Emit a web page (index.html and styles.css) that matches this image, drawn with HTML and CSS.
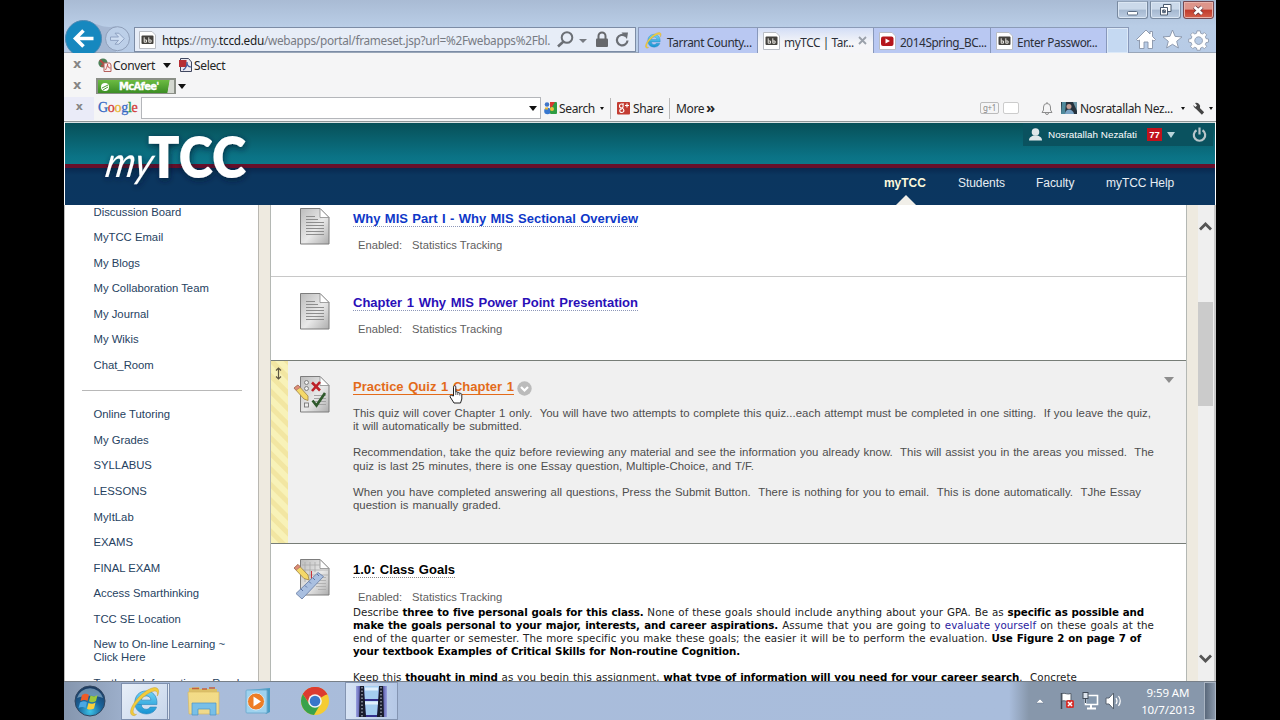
FILE: index.html
```html
<!DOCTYPE html>
<html lang="en">
<head>
<meta charset="utf-8">
<title>myTCC</title>
<link rel="stylesheet" href="styles.css">
</head>
<body>
<svg class="defs" width="0" height="0">
  <defs>
    <linearGradient id="paper" x1="0" y1="0" x2="1" y2="1"><stop offset="0" stop-color="#bcbcbc"/><stop offset=".55" stop-color="#e9e9e9"/><stop offset="1" stop-color="#adadad"/></linearGradient>
    <linearGradient id="ie" x1="0" y1="0" x2="0" y2="1"><stop offset="0" stop-color="#71d3f5"/><stop offset="1" stop-color="#1693d2"/></linearGradient>
    <radialGradient id="orb" cx=".5" cy=".85" r=".8"><stop offset="0" stop-color="#3cc4e8"/><stop offset=".5" stop-color="#19639a"/><stop offset="1" stop-color="#1c3c63"/></radialGradient>
    <linearGradient id="folder" x1="0" y1="0" x2="0" y2="1"><stop offset="0" stop-color="#f3dc86"/><stop offset="1" stop-color="#efd98c"/></linearGradient>
    <linearGradient id="film" x1="0" y1="0" x2="1" y2="0"><stop offset="0" stop-color="#9aa2e0"/><stop offset=".2" stop-color="#34308c"/><stop offset=".8" stop-color="#34308c"/><stop offset="1" stop-color="#9aa2e0"/></linearGradient>
    <symbol id="page" viewBox="0 0 30 37">
      <path d="M.5.5H20l9 9V36H.5z" fill="url(#paper)" stroke="#7d7d7d"/>
      <path d="M20 .5V9.500h9z" fill="#fff" stroke="#8b8b8b" stroke-width=".8"/>
    </symbol>
    <symbol id="bb" viewBox="0 0 17 18">
      <path d="M.5.5H13l3.500 3.500V17.500H.5z" fill="#fff" stroke="#b9bdc4"/>
      <rect x="2.500" y="4.500" width="12" height="8.500" rx="1" fill="#44423e"/>
      <path d="M5.200 6.300v5M5.200 9h2.300v2.200H5.200M9.800 6.300v5M9.800 9h2.300v2.200H9.800" stroke="#e8e6e0" fill="none"/>
    </symbol>
    <symbol id="elogo" viewBox="0 0 40 40">
      <path d="M11 23H34C35 12 28 7 21.500 7 13 7 8 13 8 21c0 8 6 13 13.500 13 6 0 10.500-3 12-8H26c-1.200 2-2.600 2.600-4.600 2.600-3.600 0-5.700-2.600-5.700-5.600M15.700 17.800c.6-3.400 2.800-5 5.800-5s5.200 1.800 5.500 5z" fill="url(#ie)" fill-rule="evenodd" stroke="#2a86bd" stroke-width=".8"/>
      <path d="M8 36C-1 37 3 24 13 14 23 4 35-1 36 7c.3 2-.4 4-1.500 6 .5-3 .3-6-3-6C24 7 6 23 6 31c0 3 2 4 4 3.500z" fill="#f2cc3c" stroke="#caa133" stroke-width=".6"/>
    </symbol>
  </defs>
</svg>
<div class="screen">
  <header class="chrome">
    <svg class="navbtns" width="70" height="53" viewBox="0 0 70 53">
      <path d="M26 23c10 1 14 6 26 3v26H26z" fill="#a6b8d3"/>
      <circle cx="19.500" cy="38.500" r="18" fill="#1688bf" stroke="#4d89b3"/>
      <path d="M29.500 38.500H11.500M19.500 30.500l-8 8 8 8" fill="none" stroke="#fff" stroke-width="3.600"/>
      <circle cx="53.500" cy="38.700" r="12" fill="#bccfe8" stroke="#8f9fb9"/>
      <path d="M46.500 37h8l-3.500-3.800h3.800l5.500 5.500-5.500 5.500H51l3.500-3.800h-8z" fill="#cfdef2" stroke="#8a9dbd" stroke-width=".9"/>
    </svg>
    <div class="chrome-main">
      <div class="winbtns">
        <span class="wb"><svg width="31" height="18"><rect x="10.500" y="10.500" width="10" height="3.500" rx="1" fill="#fff" stroke="#5b6c83"/></svg></span>
        <span class="wb"><svg width="31" height="18"><path d="M13.500 3.500h7.500v7H13.500z" fill="#fff" stroke="#4b5a6e"/><path d="M10.500 6.500H17.500v7.500h-7zM12.700 9h2.600v2.700h-2.600z" fill="#fff" fill-rule="evenodd" stroke="#4b5a6e"/></svg></span>
        <span class="wb close"><svg width="31" height="18"><path d="M11.500 6l7.500 7M19 6l-7.500 7" stroke="#63333b" stroke-width="4.200"/><path d="M11.500 6l7.500 7M19 6l-7.500 7" stroke="#fff" stroke-width="2.700"/></svg></span>
      </div>
      <div class="navrow">
        <div class="address">
          <svg width="17" height="18"><use href="#bb"/></svg>
          <span class="url"><b>https</b>://my.<b>tccd.edu</b>/webapps/portal/frameset.jsp?url=%2Fwebapps%2Fbl.</span>
          <svg class="addr-icons" width="80" height="22" viewBox="0 0 80 22">
            <circle cx="12" cy="8.500" r="5.300" fill="none" stroke="#6b6f75" stroke-width="2"/><path d="M8.500 12.500l-5.500 5" stroke="#6b6f75" stroke-width="2.600"/>
            <path d="M24 10h8l-4 4z" fill="#777b82"/>
            <rect x="41" y="9.500" width="12" height="8.500" rx="1" fill="#66686c"/><path d="M43.500 10V7a3.500 3.500 0 0 1 7 0v3" fill="none" stroke="#66686c" stroke-width="2"/>
            <path d="M70.500 7A5.300 5.300 0 1 0 72.500 11.500" fill="none" stroke="#6b6f75" stroke-width="2.200"/><path d="M66.500 3.500l6.500 0-1 6.500z" fill="#6b6f75"/>
          </svg>
        </div>
        <div class="tabs">
          <div class="tab t1"><svg width="19" height="19"><use href="#elogo"/></svg><span>Tarrant County...</span></div>
          <div class="tab active t2"><svg width="17" height="18"><use href="#bb"/></svg><span>myTCC | Tar...</span><svg width="9" height="9" class="tabx"><path d="M1 1l7 7M8 1L1 8" stroke="#9aa0aa" stroke-width="1.800"/></svg></div>
          <div class="tab t3"><svg width="17" height="18"><path d="M.5.5H13l3.500 3.500V17.500H.5z" fill="#fff" stroke="#b9bdc4"/><rect x="2" y="4.500" width="12.500" height="9.500" rx="2" fill="#b5161b"/><path d="M6.500 6.500v5l4.500-2.500z" fill="#fff"/></svg><span>2014Spring_BC...</span></div>
          <div class="tab t4"><svg width="17" height="18"><use href="#bb"/></svg><span>Enter Passwor...</span></div>
          <div class="newtab"></div>
        </div>
        <svg class="tools" width="80" height="25" viewBox="0 0 80 25">
          <g fill="#fff" stroke="#8793a8" stroke-width=".9">
            <path d="M1.500 12.500L11 3l4 4V4.500h2.500v5l3 3-1.500 1.500-1.500-1v8.500h-4.500V15h-4v6.500H4.500V13L3 14z"/>
            <path d="M37.500 3l2.600 6.400 6.900.5-5.300 4.400 1.700 6.700-5.900-3.700-5.900 3.700 1.700-6.700L28 9.900l6.900-.5z"/>
            <path transform="translate(6 1.200) scale(.9)" d="M62.200 3h3.600l.5 2.600 2 .8 2.200-1.500 2.500 2.500-1.500 2.200.8 2 2.700.5v3.400l-2.700.5-.8 2 1.500 2.200-2.500 2.500-2.200-1.500-2 .8-.5 2.500h-3.600l-.5-2.500-2-.8-2.200 1.500-2.500-2.500 1.500-2.200-.8-2-2.700-.5v-3.400l2.700-.5.8-2-1.500-2.200 2.500-2.500 2.200 1.500 2-.8zM64 9.500a4.300 4.300 0 1 0 .01 0z" fill-rule="evenodd"/>
          </g>
        </svg>
      </div>
    </div>
  </header>

  <div class="toolbars">
    <div class="bar b1"><i class="x">x</i>
      <svg class="conv" width="14" height="14"><circle cx="5" cy="5" r="4.600" fill="#4c8159"/><path d="M2 2l5 5-4 1" stroke="#b14c43" stroke-width="2" fill="none"/><path d="M6 5h6l1 2v6.500H6z" fill="#f7eeee" stroke="#b5605c"/><path d="M7.500 12c2-4 2-5 2-6 0 3 1 4 3 4" stroke="#c9504b" fill="none"/></svg>
      <span class="convert">Convert</span><i class="caret"></i>
      <svg class="sel" width="13" height="14"><path d="M1.500.5h8L12.500 4v9.500h-11z" fill="#ebe9f0" stroke="#40475f"/><rect x="0" y="2" width="7.500" height="7" fill="#b62d33"/><path d="M4 12c4-2 4-5 4-8 0 3 1 5 4 5" stroke="#405a9a" stroke-width="1.200" fill="none"/></svg>
      <span>Select</span></div>
    <div class="bar b2"><i class="x">x</i>
      <span class="mcafee"><svg width="10" height="10"><circle cx="5" cy="5" r="4" fill="#fff"/><path d="M2 6l6-3M3 8l5-3" stroke="#4b9a30"/></svg><b>McAfee'</b></span><i class="caret"></i></div>
    <div class="bar b3"><span class="xbox"><i class="x small">x</i></span>
      <span class="google"><i>G</i><i>o</i><i>o</i><i>g</i><i>l</i><i>e</i></span>
      <span class="gsearch"><i class="caret"></i></span>
      <svg class="gs" width="14" height="14"><circle cx="3" cy="3.500" r="2.300" fill="#4176c8"/><circle cx="3.500" cy="10" r="3.300" fill="#3777cf"/><path d="M1 8.500h3v-2H1z" fill="#e8b934"/><rect x="6" y="1" width="7" height="12" rx="1" fill="#2e9d43"/><path d="M6 1h5l-3 5H6z" fill="#d83a31"/><circle cx="8" cy="8" r="2" fill="#efc23d"/></svg>
      <span class="search">Search</span><i class="caret tiny"></i><i class="sep"></i>
      <svg class="gshare" width="14" height="14"><rect x="0" y="1" width="13" height="12.500" rx="1" fill="#c33c32"/><path d="M7 3H4.500a2 2 0 0 0 0 4c2 0 2-2.500 1-4M5 7c2 1 3 4 0 4.500-3 0-3-3.500 0-3.500M8 4.500h4M10 2.500v4" stroke="#fff" fill="none" stroke-width="1.100"/></svg>
      <span class="share">Share</span><i class="sep"></i><span class="more">More <b>»</b></span>
      <span class="right">
        <span class="plus">g+1</span><span class="count"></span>
        <svg class="bell" width="12" height="14"><path d="M1 11.500h10L9.500 9V6a3.500 3.500 0 0 0-7 0v3zM4.500 12a1.500 1.500 0 0 0 3 0M6 1v1.500" fill="none" stroke="#8d8d8d"/></svg>
        <svg class="ava" width="16" height="12"><rect width="16" height="12" fill="#26323d"/><path d="M1 0h4l-1 12H0z" fill="#4f8a9c"/><path d="M12 0h4v9z" fill="#6d97a8"/><circle cx="8" cy="4.500" r="2.500" fill="#c49e94"/><path d="M4 12c0-6 8-6 9 0z" fill="#7aa4c5"/></svg>
        <span class="gname">Nosratallah Nez...</span><i class="caret tiny"></i>
        <svg class="wrench" width="13" height="13"><path d="M5.500 6L11 11.500" stroke="#444" stroke-width="3.200"/><path d="M1 3l2.500 2L5 3.500 3 1a4 4 0 0 1 5 5C6 8 3 8 1 3z" fill="#444"/></svg><i class="caret tiny last"></i>
      </span></div>
  </div>

  <div class="banner">
    <svg class="logo" width="190" height="81" viewBox="0 0 190 81">
      <defs><filter id="glow" x="-20%" y="-20%" width="140%" height="150%"><feDropShadow dx="1" dy="2" stdDeviation="3" flood-color="#001c30" flood-opacity=".75"/></filter></defs>
      <g filter="url(#glow)" fill="#fff">
        <text class="my" transform="translate(39 54) skewX(-10) scale(1 1.080)" x="0" y="0" textLength="47" lengthAdjust="spacingAndGlyphs">my</text>
        <text class="tcc" x="83" y="55" textLength="98" lengthAdjust="spacingAndGlyphs">TCC</text>
      </g>
    </svg>
    <div class="banner-right">
      <div class="user">
        <svg width="14" height="13" class="person"><circle cx="6.500" cy="4" r="3.800" fill="#dfe7ea"/><path d="M0 12.500C0 9 3 8 4.500 7.500h4C10 8 13 9 13 12.500z" fill="#dfe7ea"/></svg>
        <span class="uname">Nosratallah Nezafati</span><b class="badge">77</b><i class="udown"></i>
        <svg width="15" height="15" class="power"><path d="M4.500 3.200a5.700 5.700 0 1 0 6 0M7.500.500v7" fill="none" stroke="#b9c6ca" stroke-width="2.200"/></svg>
      </div>
      <nav class="nav"><a class="n1"><b>myTCC</b></a><a class="n2">Students</a><a class="n3">Faculty</a><a class="n4">myTCC Help</a></nav>
    </div>
  </div>

  <div class="content">
    <aside class="side">
      <div class="grp g1"><a>Discussion Board</a><a>MyTCC Email</a><a>My Blogs</a><a>My Collaboration Team</a><a>My Journal</a><a>My Wikis</a><a>Chat_Room</a></div>
      <hr>
      <div class="grp"><a>Online Tutoring</a><a>My Grades</a><a>SYLLABUS</a><a>LESSONS</a><a>MyItLab</a><a>EXAMS</a><a>FINAL EXAM</a><a>Access Smarthinking</a><a>TCC SE Location</a><a class="two">New to On-line Learning ~<br>Click Here</a><a class="tb">Textbook Information -- Read</a></div>
    </aside>
    <main class="main">
      <section class="entry e1">
        <svg class="ic" width="40" height="44"><use href="#page" x="8" y="1" width="30" height="37"/><path d="M14 9.500h9M14 12.500h12M14 15.500h18M14 18.500h18M14 21.500h18M14 24.500h18M14 27.500h18" stroke="#8d8d8d"/></svg>
        <div class="txt"><h3 class="w285">Why MIS Part I - Why MIS Sectional Overview</h3><p class="en"><span>Enabled:</span> Statistics Tracking</p></div>
      </section>
      <section class="entry e2">
        <svg class="ic" width="40" height="44"><use href="#page" x="8" y="1" width="30" height="37"/><path d="M14 9.500h9M14 12.500h12M14 15.500h18M14 18.500h18M14 21.500h18M14 24.500h18M14 27.500h18" stroke="#8d8d8d"/></svg>
        <div class="txt"><h3 class="visited w285">Chapter 1 Why MIS Power Point Presentation</h3><p class="en"><span>Enabled:</span> Statistics Tracking</p></div>
      </section>
      <section class="entry e3">
        <div class="grip"><svg width="7" height="13"><path d="M3.500 1.500v10M1 3.500l2.500-2.500L6 3.500M1 9.500L3.500 12 6 9.500" fill="none" stroke="#5d5641" stroke-width="1.200"/></svg></div>
        <svg class="ic" width="40" height="44"><use href="#page" x="8" y="1" width="30" height="37"/>
          <path d="M22 20.500h12M22 23.500h12M22 26.500h12M22 29.500h12" stroke="#a3a3a3"/>
          <g fill="#eee" stroke="#777" stroke-width=".9"><circle cx="14.500" cy="7.500" r="2"/><circle cx="14.500" cy="13.500" r="2"/><rect x="12.500" y="28" width="4" height="4"/></g>
          <path d="M20 7.500l8 8M28 7l-8 9" stroke="#bd2027" stroke-width="2.600"/>
          <path d="M20.500 25.500l4 5L33 18" fill="none" stroke="#2f5a2c" stroke-width="2.600"/>
          <path d="M2 13l4-3 10 11v4.500l-4-1.500z" fill="#f4d869" stroke="#a08341" stroke-width=".8"/><path d="M2 13l4-3 2.300 2.300-4.300 3z" fill="#df8c76" stroke="#966" stroke-width=".6"/>
        </svg>
        <div class="txt"><div class="qhead"><h3 class="hot w161">Practice Quiz 1 Chapter 1</h3><svg width="15" height="15"><circle cx="7.500" cy="7.500" r="7.200" fill="#bbb"/><path d="M4 6l3.500 3.500L11 6" fill="none" stroke="#fff" stroke-width="2.200"/></svg></div>
          <p class="q"><span class="l w798">This quiz will cover Chapter 1 only.&nbsp; You will have two attempts to complete this quiz...each attempt must be completed in one sitting.&nbsp; If you leave the quiz,</span><span class="l w169">it will automatically be submitted.</span></p>
          <p class="q"><span class="l w801">Recommendation, take the quiz before reviewing any material and see the information you already know.&nbsp; This will assist you in the areas you missed.&nbsp; The</span><span class="l w401">quiz is last 25 minutes, there is one Essay question, Multiple-Choice, and T/F.</span></p>
          <p class="q"><span class="l w788">When you have completed answering all questions, Press the Submit Button.&nbsp; There is nothing for you to email.&nbsp; This is done automatically.&nbsp; TJhe Essay</span><span class="l w148">question is manually graded.</span></p>
        </div>
        <i class="menu-arrow"></i>
      </section>
      <section class="entry e4">
        <svg class="ic" width="40" height="44"><use href="#page" x="8" y="1" width="30" height="37"/>
          <path d="M10 7h18M10 12h26M10 17h26M13 4v20M18 4v18M23 4v10M24 19.500h10M24 22.500h10M24 25.500h10M24 28.500h10M26 31.500h8" stroke="#a9a9a9" stroke-width=".8"/>
          <path d="M19.500 13v11" stroke="#c8303c"/>
          <path d="M4 35.500L26 14.500l5.500 4L10 41z" fill="#a9bfe0" stroke="#6d82a8" stroke-width=".9"/><path d="M9 31l2 2M13 27.500l2 2M17 23.500l2 2M21 20l2 2M25 16l2 2" stroke="#5c74a4"/>
          <path d="M2 10l4-3.500 10 10.500 1 5-5-1.500z" fill="#f4d869" stroke="#a08341" stroke-width=".8"/><path d="M2 10l4-3.500 2.300 2.300L4.300 12z" fill="#df8c76" stroke="#966" stroke-width=".6"/>
        </svg>
        <div class="txt"><h3 class="plain w101">1.0: Class Goals</h3><p class="en"><span>Enabled:</span> Statistics Tracking</p>
          <p class="v"><span class="l w790">Describe <b>three to five personal goals for this class.</b> None of these goals should include anything about your GPA. Be as <b>specific as possible and</b></span><span class="l w801"><b>make the goals personal to your major, interests, and career aspirations.</b> Assume that you are going to <a>evaluate yourself</a> on these goals at the</span><span class="l w788">end of the quarter or semester. The more specific you make these goals; the easier it will be to perform the evaluation. <b>Use Figure 2 on page 7 of</b></span><span class="l w387"><b>your textbook Examples of Critical Skills for Non-routine Cognition.</b></span></p>
          <p class="v keep"><span class="l w724">Keep this <b>thought in mind</b> as you begin this assignment, <b>what type of information will you need for your career search</b>.&nbsp; Concrete</span></p>
        </div>
      </section>
    </main>
    <div class="gutter"></div>
    <div class="scroll">
      <svg width="15" height="12"><path d="M2 9.500L7.500 4 13 9.500" fill="none" stroke="#555" stroke-width="2.800"/></svg>
      <div class="thumb"></div>
      <svg class="dn" width="15" height="12"><path d="M2 2.500L7.500 8 13 2.500" fill="none" stroke="#555" stroke-width="2.800"/></svg>
    </div>
    <svg class="cursor" width="14" height="19" viewBox="0 0 14 19"><path d="M4.500 11V2.200c0-2 2.300-2 2.300 0V7c1-.8 2 0 2 .7.900-.6 2 0 2 .8 1-.5 2 .2 2 1.200V14l-1.300 4H5L1.200 12C.5 10.500 2 9.500 3 10.500z" fill="#fff" stroke="#222"/><path d="M6.800 7v3M8.800 7.700V10M10.800 8.500v2" stroke="#333" stroke-width=".8"/></svg>
  </div>

  <footer class="taskbar">
    <svg class="start" width="32" height="34" viewBox="0 0 32 34"><circle cx="16" cy="17" r="15" fill="url(#orb)" stroke="#30455f"/><path d="M3 14a13.500 13.500 0 0 1 26 0c-8-3-18-3-26 0z" fill="#b3d4e8" opacity=".5"/><path d="M8 11c3-2 5-1.500 7 0l-1.500 6c-2-1.300-4-1.500-7 0z" fill="#ed5b27"/><path d="M16.500 11.500c2 1.200 5 1 7-.5l-1.500 6c-2.500 1.600-5 1.500-7 .3z" fill="#9cc83c"/><path d="M6 18.500c3-1.600 5-1.500 7 0L11.500 24c-2-1.300-4-1.300-7 0z" fill="#4aa7e3"/><path d="M14.500 19c2 1.200 5 1 7-.5L20 24.500c-2.500 1.500-5 1.300-7 .2z" fill="#fbcf3c"/></svg>
    <div class="tb-ie"><svg width="39" height="36"><use href="#elogo" width="36" height="34" x="3" y="1"/></svg></div>
    <svg class="folder" width="34" height="34" viewBox="0 0 34 34"><path d="M2 4l10-1 1 2h17v5H2z" fill="#dcc067"/><path d="M5 4.500h7M15 5h5M22 4h6" stroke="#c4603f" stroke-width="1.500"/><path d="M1 8h31v22H2z" fill="url(#folder)" stroke="#d5b765" stroke-width=".7"/><path d="M5 19h24v12h-6v-6H11v6H5z" fill="#78bfe7" stroke="#4c94c4" stroke-width=".7"/></svg>
    <svg class="wmp" width="27" height="30" viewBox="0 0 27 30"><path d="M3 4l22-2v24l-4 2z" fill="#4a9cc4"/><rect x="1" y="4" width="21" height="23" rx="1" fill="#9ed2ee" stroke="#71acd0"/><circle cx="11" cy="15.500" r="8.500" fill="#ee7d25" stroke="#d8e6ef"/><path d="M8.500 10.500v10l7.500-5z" fill="#fff"/></svg>
    <svg class="chromeic" width="30" height="30" viewBox="0 0 30 30"><circle cx="15" cy="15" r="14" fill="#f5cc33"/><path d="M15 15L2.900 8A14 14 0 0 1 27.100 8z" fill="#dc3b30"/><path d="M2.900 8A14 14 0 0 0 14 29l6.500-11L9 17.500z" fill="#38a24b"/><path d="M2.900 8A14 14 0 0 1 27.500 8.500H15l-6.500 8z" fill="#dc3b30"/><circle cx="15" cy="15" r="6.800" fill="#f5f5f5"/><circle cx="15" cy="15" r="5.300" fill="#3976c9"/></svg>
    <div class="tb-film"><svg width="31" height="31" viewBox="0 0 31 31"><rect width="31" height="31" fill="url(#film)"/><path d="M4 0h4l2 31H3zM27 0h-4l-2 31h7z" fill="#191c2c"/><path d="M8 0h15l-.8 13H8.800zM8.900 15h13.200L21 29H10z" fill="#a4cdf0"/><path d="M9 3h13M9 17h13" stroke="#e0effb" stroke-width="3"/><path d="M6 1v30M25 1v30" stroke="#b6bccb" stroke-width="1.200" stroke-dasharray="1.500 2"/></svg></div>
    <div class="tray">
      <svg width="96" height="24" viewBox="0 0 96 24">
        <path d="M5 14h8L9 10z" fill="#fff" stroke="#66778f" stroke-width=".5"/>
        <path d="M30.500 4v16" stroke="#3d4652" stroke-width="1.500"/><path d="M31 4.500c3-1 5 1.500 9 0V12c-4 1.500-6-1-9 0z" fill="#fff" stroke="#59636f"/><rect x="35" y="11" width="8" height="8" rx="1.500" fill="#d42f2b"/><path d="M37 13l4 4M41 13l-4 4" stroke="#fff" stroke-width="1.500"/>
        <path d="M54.500 6.500h12v9h-12z" fill="#8598ad" stroke="#fff" stroke-width="1.600"/><path d="M60 16v3M56 19.500h9" stroke="#fff" stroke-width="2"/><rect x="52" y="3.500" width="5" height="6" fill="#dde4ed" stroke="#444e5b"/><path d="M54.500 9.500V14" stroke="#444e5b"/>
        <path d="M75 9h3l4.500-5v16L78 15h-3z" fill="#fff" stroke="#56616e"/><path d="M85 9q2 3 0 6M87.500 7q3.500 5 0 10" fill="none" stroke="#fff" stroke-width="1.200"/>
      </svg>
      <div class="clock"><span>9:59 AM</span><span>10/7/2013</span></div>
      <div class="peek"></div>
    </div>
  </footer>
</div>
</body>
</html>
```

FILE: styles.css
```css
* { box-sizing: border-box; }
body { margin: 0; background: #000; width: 1280px; height: 720px; overflow: hidden; font-family: "Liberation Sans", Arial, sans-serif; }
.defs { position: absolute; }
svg { display: block; flex: none; }
i { font-style: normal; }
p, h3 { margin: 0; }
.screen { margin-left: 64px; width: 1152px; height: 720px; display: flex; flex-direction: column; background: #fff; overflow: hidden; }

.chrome { height: 53px; flex: none; display: flex; background: linear-gradient(#a9bbd4, #b9cde6 26px, #b7cbe6); border-bottom: 1px solid #99a6b8; font-family: "Noto Sans", sans-serif; font-size: 12px; color: #2b2f38; }
.chrome-main { flex: 1; }
.winbtns { height: 27px; display: flex; justify-content: flex-end; gap: 2px; padding: 1px 2px 0 0; }
.wb { width: 31px; height: 18px; border: 1px solid #78899f; border-top-color: #93a4ba; border-radius: 0 0 3px 3px; background: linear-gradient(#cbd9ea 45%, #a5b8d0 50%, #bccde2); box-shadow: inset 0 0 0 1px #dbe6f3; }
.wb svg { margin: -1px; }
.wb.close { background: linear-gradient(#dd958a 45%, #c03a2b 50%, #d4604b); border-color: #744a52; box-shadow: inset 0 0 0 1px #e9b3ab; }
.navrow { display: flex; height: 26px; }
.address { width: 502px; height: 25px; border: 1px solid #7c8ca5; background: #e7edf7; display: flex; align-items: center; padding-left: 4px; }
.url { width: 393px; margin-left: 6px; white-space: nowrap; color: #777b83; letter-spacing: -.3px; font-size: 11.800px; }
.url b { font-weight: 400; color: #1d1e22; }
.addr-icons { margin-left: 4px; }
.tabs { display: flex; margin-left: 2px; border-top: 1px solid #8b9bb7; height: 26px; }
.tab { display: flex; align-items: center; padding-left: 5px; background: #b9c8f2; border-left: 1px solid #8898bb; white-space: nowrap; font-size: 11.800px; letter-spacing: -.4px; }
.tab span { margin: 2px 0 0 4px; }
.t1 { width: 119px; } .t2 { width: 116px; } .t3 { width: 117px; } .t4 { width: 116px; }
.active { background: linear-gradient(#d3def6, #f5f5f8 60%); }
.tabx { margin-left: auto; margin-right: 6px; }
.newtab { width: 23px; background: #c5d9f2; border: 1px solid #8898bb; border-width: 0 1px; box-shadow: inset 0 0 0 1px #dce9f8; }
.tools { margin-left: 6px; }

.toolbars { height: 69px; flex: none; background: #f5f5f6; border-bottom: 1px solid #8f9797; font-family: "Noto Sans", sans-serif; font-size: 12px; letter-spacing: -.35px; color: #252525; }
.bar { display: flex; align-items: center; white-space: nowrap; }
.b1 { height: 24px; padding-left: 8px; }
.b2 { height: 18px; padding-left: 8px; }
.b3 { height: 26px; }
.x { font: bold 13px/13px "DejaVu Sans", sans-serif; color: #858585; width: 10px; text-align: center; margin-top: -3px; }
.caret { border: 4px solid transparent; border-top: 5px solid #111; border-bottom: 0; width: 0; flex: none; }
.caret.tiny { border-width: 3px 2.5px 0; }
.conv { margin: 0 0 0 16px; }
.convert { margin: 0 9px 0 1px; width: 41px; }
.sel { margin: 0 2px 0 8px; }
.mcafee { width: 80px; height: 16px; margin: 0 2px 0 14px; border: 2px solid #8a8f86; border-bottom-width: 1px; background: linear-gradient(100deg, transparent 91%, #d4d8d0 92%), linear-gradient(#6cbb42, #3c8e24); display: flex; align-items: center; padding-left: 2px; color: #fff; font: 10px "DejaVu Sans", sans-serif; }
.mcafee b { margin-left: 9px; letter-spacing: -.7px; -webkit-text-stroke: .3px #fff; }
.xbox { width: 30px; height: 23px; background: #eaebf8; display: flex; align-items: center; justify-content: center; }
.x.small { font-size: 11px; }
.google { font: 14px "Liberation Serif", serif; width: 43px; padding-left: 4px; letter-spacing: -.3px; -webkit-text-stroke: .3px; }
.google i:nth-child(1), .google i:nth-child(4) { color: #3569c4; }
.google i:nth-child(2), .google i:nth-child(6) { color: #d23b38; }
.google i:nth-child(3) { color: #e8b32c; }
.google i:nth-child(5) { color: #2e9c50; }
.gsearch { width: 400px; height: 22px; margin-left: 4px; border: 1px solid #b4b6ba; background: #fff; display: flex; align-items: center; justify-content: flex-end; padding-right: 3px; }
.gs { margin: 0 1px 0 3px; }
.search { margin-right: 5px; width: 36px; }
.sep { width: 1px; height: 21px; background: #b9b9b9; margin-left: 6px; }
.gshare { margin: 0 2px 0 6px; }
.share { width: 30px; }
.more { margin-left: 6px; }
.more b { font-size: 15px; line-height: 12px; margin-left: -1px; }
.right { display: flex; align-items: center; margin-left: auto; }
.plus { width: 19px; height: 12px; border: 1px solid #bbb; border-radius: 2px; font-size: 8px; line-height: 10px; color: #888; text-align: center; }
.count { width: 16px; height: 12px; border: 1px solid #ccc; background: #fff; border-radius: 2px; margin-left: 4px; }
.bell { margin: 0 8px 0 22px; }
.gname { margin: 0 7px 0 3px; width: 94px; }
.wrench { margin: 0 4px 0 7px; }
.last { margin-right: 3px; }

.banner { height: 83px; flex: none; display: flex; justify-content: space-between; margin: 0 1px 0 1px; border-top: 1px solid #dbe3e3; background: linear-gradient(#075058, #0b7386 34px, #0c7789 41px, #680f2a 41px, #680f2a 45px, #08284f 45px, #0b365f 52px, #0b3660); }
.my { font: italic 39px Lato, sans-serif; }
.tcc { font: 800 57px Lato, sans-serif; }
.banner-right { width: 346px; }
.user { height: 23px; margin-left: 154px; width: 190px; background: #0a525f; display: flex; align-items: center; color: #fff; font-size: 9.900px; white-space: nowrap; }
.person { margin-left: 6px; }
.uname { margin-left: 5px; width: 89px; text-align-last: justify; }
.badge { width: 15px; height: 13px; background: #c1121c; font-size: 9.500px; line-height: 13px; text-align: center; margin-left: 10px; }
.udown { border: 4.500px solid transparent; border-top: 6px solid #b9d4da; border-bottom: 0; margin-left: 5px; }
.power { margin-left: 17px; }
.nav { display: flex; margin-top: 20px; height: 39px; font-size: 12px; line-height: 34px; letter-spacing: -.05px; color: #e7edf3; white-space: nowrap; }
.n1 { width: 73px; padding-left: 15px; color: #fbf8dc; position: relative; }
.n1::after { content: ""; position: absolute; left: 27px; bottom: 0; border: 10px solid transparent; border-bottom: 10px solid #f1efe9; border-top: 0; }
.n2 { width: 79px; padding-left: 16px; }
.n3 { width: 70px; padding-left: 15px; }
.n4 { padding-left: 15px; }

.content { height: 476px; flex: none; display: flex; position: relative; overflow: hidden; background: #eeeae0; border-left: 1px solid #bcbcbc; border-right: 2px solid #c8c8c8; }
.side { width: 194px; background: #fff; border-right: 1px solid #b9b7b1; font-size: 11.300px; color: #26425f; white-space: nowrap; }
.grp a { display: block; height: 25.600px; line-height: 25.600px; padding-left: 28.500px; }
.g1 { margin-top: -5.500px; }
.side hr { border: 0; height: 1px; background: #b8b8b8; margin: 11px 16px 11.500px 17px; }
.grp a.two { height: 38px; line-height: 13px; padding-top: 5.500px; }
.grp a.tb { line-height: 24px; }
.main { width: 917px; margin-left: 10.500px; background: #fff; border: 1px solid #b4b8b4; border-width: 0 1px; }
.entry { display: flex; position: relative; padding-left: 21.500px; }
.txt { margin-left: 21px; }
.e1 { height: 72px; border-bottom: 1px solid #c8c8c8; padding-top: 2px; }
.e2 { height: 83px; padding-top: 15px; }
.e3 { height: 184px; border: 1px solid #777d77; border-width: 1px 0; background: #f0f0f0; padding-left: 0; padding-top: 14px; }
.e4 { height: 150px; padding-top: 14px; }
.grip { width: 17px; margin-top: -14px; margin-right: 4.500px; padding: 6px 0 0 4px; background: repeating-linear-gradient(45deg, #f8f2b8 0 5px, #f2e6a2 6px 10px, #f8f2b8 11px); }
h3 { font-size: 13px; line-height: 15px; font-weight: 700; color: #0e38c8; border-bottom: 1px dotted #8d97b8; white-space: nowrap; text-align-last: justify; margin-top: 3px; height: 17px; padding-top: 1px; }
.e2 h3 { margin-top: 2px; }
.e4 h3 { margin-top: 3px; }
h3.visited { color: #2a0fb8; }
h3.hot { color: #e36b1a; border-bottom: 1px solid #e36b1a; margin: 0; height: 17px; }
h3.plain { color: #000; border-color: #888; }
.en { margin: 10px 0 0 5px; font-size: 11.200px; line-height: 16px; color: #5e5e5e; white-space: nowrap; }
.e4 .en { margin-top: 11px; }
.en span { display: inline-block; width: 51px; }
.qhead { display: flex; gap: 3px; margin-top: 3px; align-items: center; height: 17px; }
.qhead svg { margin-top: 3px; }
.l { display: block; white-space: nowrap; text-align-last: justify; }
.q { font-size: 11.400px; line-height: 13.600px; color: #4d4d4d; margin-top: 12.400px; letter-spacing: .03px; }
.qhead + .q { margin-top: 11.500px; }
.v { font-family: "DejaVu Sans", Verdana, sans-serif; font-size: 10.300px; line-height: 13px; color: #222; margin-top: 1px; letter-spacing: .06px; }
.v b { color: #000; letter-spacing: -.12px; }
.v a { color: #2a22a0; }
.v.keep { margin-top: 13px; }
.w101 { width: 102px; } .w148 { width: 148px; } .w161 { width: 161px; } .w169 { width: 169px; }
.w285 { width: 285px; } .w387 { width: 387px; } .w401 { width: 401px; } .w724 { width: 724px; }
.w788 { width: 788px; } .w790 { width: 791px; } .w798 { width: 798px; } .w801 { width: 801px; }
.menu-arrow { position: absolute; right: 12px; top: 16px; border: 5px solid transparent; border-top: 6px solid #8d8d8d; border-bottom: 0; }
.gutter { width: 11px; }
.scroll { flex: 1; background: #efefef; display: flex; flex-direction: column; padding: 15px 0 16px; align-items: center; }
.thumb { width: 15px; height: 104px; background: #cbcbcb; margin-top: 70px; }
.dn { margin-top: auto; }
.cursor { position: absolute; left: 384px; top: 180px; }

.taskbar { height: 39px; flex: none; display: flex; align-items: center; border-top: 1px solid #777f88; background: linear-gradient(90deg, #8596ae 0, #a9bcda 90px, #a9bddc 945px, #8797ab 965px, #8797ab); }
.start { margin-left: 10px; }
.tb-ie { width: 49px; height: 37px; margin-left: 15px; border: 1px solid #7e90ae; border-right: 3px double #7e90ae; background: linear-gradient(135deg, #e8eff8, #c6d5ea); padding-left: 2px; }
.folder { margin-left: 17px; }
.wmp { margin-left: 24px; }
.chromeic { margin-left: 28px; }
.tb-film { width: 53px; height: 38px; margin-left: 15px; border: 1px solid #8495b2; background: linear-gradient(90deg, #d7e3f4, #b5c8e6); display: flex; justify-content: center; align-items: center; }
.tray { margin-left: auto; display: flex; align-items: center; height: 38px; }
.clock { width: 60px; margin-left: 11px; display: flex; flex-direction: column; align-items: center; font: 11.500px/17.500px "Noto Sans", sans-serif; color: #fff; white-space: nowrap; letter-spacing: -.1px; }
.peek { width: 12px; height: 38px; margin-left: 6px; border: 1px solid #a9b4c2; background: linear-gradient(90deg, #59687b, #8b99ab); }
```
